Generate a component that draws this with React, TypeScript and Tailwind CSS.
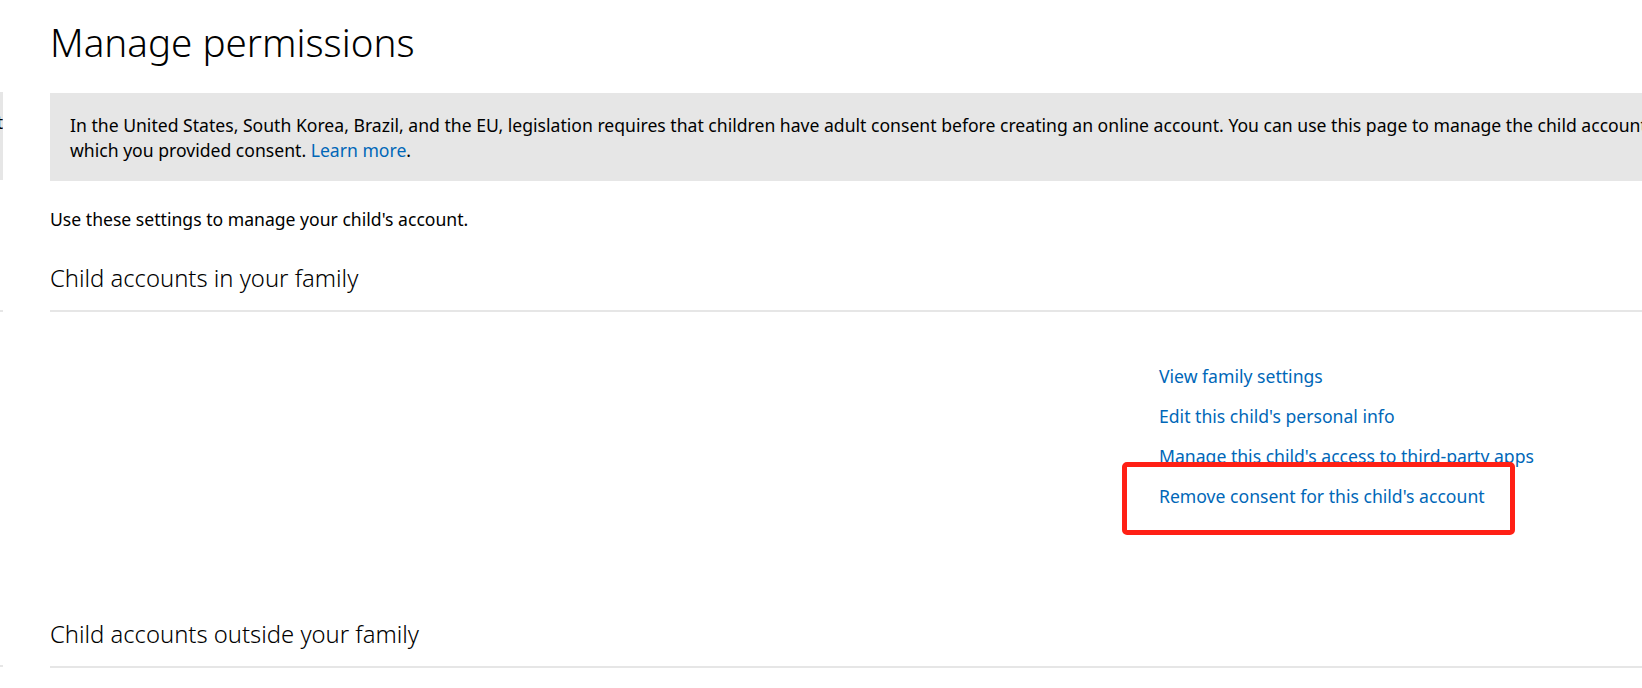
const links = [
  "View family settings",
  "Edit this child's personal info",
  "Manage this child's access to third-party apps",
  "Remove consent for this child's account",
];

function SectionHeading({ children }: { children: string }) {
  return (
    <div className="border-b-2 border-[#e6e6e6] pb-[16px]">
      <h2 className="text-[23.8px] leading-[32px] font-light">{children}</h2>
    </div>
  );
}

/** Clipped edge of the nav column that sits left of the page. */
function SideEdge() {
  return (
    <div className="w-[3px] shrink-0 overflow-hidden">
      <div className="mt-[92px] flex h-[88px] w-[40px] -translate-x-[37px] items-start justify-end bg-[#e6e6e6] pt-[18px]">
        <span className="text-[17.6px] leading-[25px]">st</span>
      </div>
      <div className="mt-[130px] h-[2px] bg-[#e6e6e6]" />
      <div className="mt-[353px] h-[2px] bg-[#e6e6e6]" />
    </div>
  );
}

export default function App() {
  return (
    <div className="flex h-[688px] w-[1642px] overflow-hidden bg-white font-['Noto_Sans','Open_Sans',sans-serif] text-black">
      <SideEdge />
      <main className="ml-[47px] flex-1">
        <h1 className="mt-[16px] text-[38.6px] leading-[52px] font-light">Manage permissions</h1>

        <div className="mt-[25px] h-[88px] w-[1700px] bg-[#e6e6e6] pt-[20px] pl-[20px] text-[17.6px] leading-[25px]">
          <p className="whitespace-nowrap">
            In the United States, South Korea, Brazil, and the EU, legislation requires that children have adult consent
            before creating an online account. You can use this page to manage the child accounts for
          </p>
          <p className="whitespace-nowrap">
            which you provided consent.{" "}
            <a href="#" className="text-[#0067b8]">
              Learn more
            </a>
            .
          </p>
        </div>

        <p className="mt-[26px] text-[17.6px] leading-[25px]">Use these settings to manage your child's account.</p>

        <section className="mt-[30px]">
          <SectionHeading>Child accounts in your family</SectionHeading>
          <div className="flex pt-[44px]">
            <div className="w-[1109px] shrink-0" />
            <ul className="relative flex flex-col">
              {links.map((l) => (
                <li key={l}>
                  <a href="#" className="block text-[17.6px] leading-[40px] whitespace-nowrap text-[#0067b8]">
                    {l}
                  </a>
                </li>
              ))}
              <div className="pointer-events-none absolute top-[106px] left-[-37px] h-[73px] w-[393px] rounded-[5px] border-[5px] border-[#ff2015]" />
            </ul>
          </div>
        </section>

        <section className="mt-[102px]">
          <SectionHeading>Child accounts outside your family</SectionHeading>
        </section>
      </main>
    </div>
  );
}
